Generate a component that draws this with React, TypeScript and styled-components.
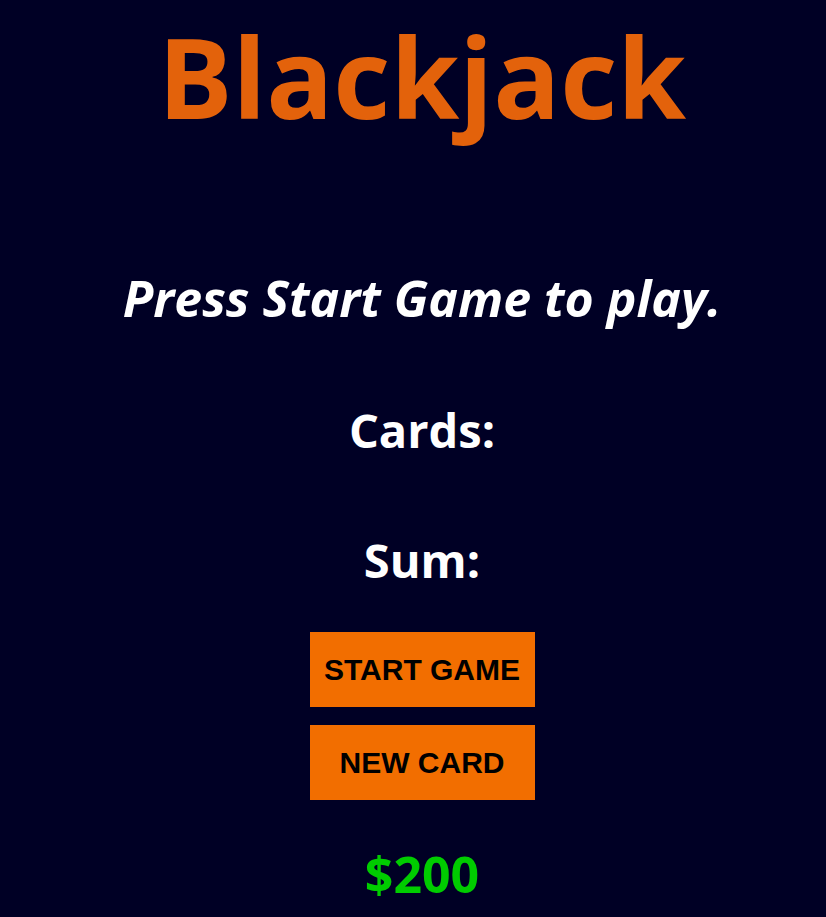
import React, { useState } from 'react';
import styled, { createGlobalStyle } from 'styled-components';

const GlobalStyle = createGlobalStyle`
  html, body {
    margin: 0;
    padding: 0;
    background-color: #000025;
  }
  body {
    font-family: 'Open Sans', 'DejaVu Sans', sans-serif;
    text-align: center;
    color: white;
  }
`;

const Page = styled.main`
  display: flex;
  flex-direction: column;
  align-items: center;
  min-height: 917px;
  padding-left: 18px;
  overflow: hidden;
`;

const Title = styled.h1`
  margin: 0;
  font-size: 111px;
  line-height: 152px;
  font-weight: 700;
  color: #e3620b;
`;

const Message = styled.p`
  margin: 116px 0 0;
  font-size: 50px;
  line-height: 60px;
  font-weight: 700;
  font-style: italic;
`;

const Stat = styled.p`
  margin: 74px 0 0;
  font-size: 47px;
  line-height: 56px;
  font-weight: 700;
`;

const Buttons = styled.div`
  display: flex;
  flex-direction: column;
  gap: 18px;
  margin-top: 44px;
`;

const Button = styled.button`
  width: 225px;
  height: 75px;
  border: none;
  background-color: #f26e00;
  color: #000;
  font-family: 'Liberation Sans', Arial, sans-serif;
  font-size: 30px;
  font-weight: 700;
  cursor: pointer;
`;

const Chips = styled.p`
  margin: 44px 0 0;
  font-size: 50px;
  line-height: 60px;
  font-weight: 700;
  color: #00cc00;
`;

export default function App() {
  const [cards] = useState<number[]>([]);
  const [sum] = useState<number | null>(null);

  return (
    <>
      <GlobalStyle />
      <Page>
        <Title>Blackjack</Title>
        <Message>Press Start Game to play.</Message>
        <Stat>Cards: {cards.join(' ')}</Stat>
        <Stat>Sum: {sum ?? ''}</Stat>
        <Buttons>
          <Button>START GAME</Button>
          <Button>NEW CARD</Button>
        </Buttons>
        <Chips>$200</Chips>
      </Page>
    </>
  );
}
